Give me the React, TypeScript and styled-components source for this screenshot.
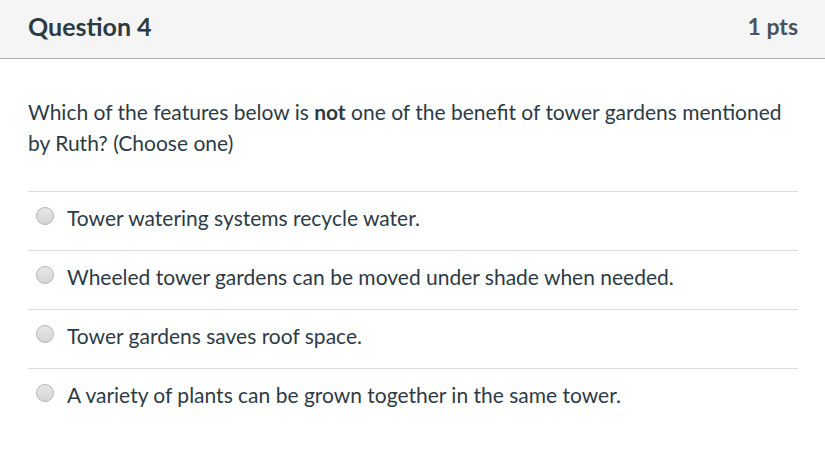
import * as React from "react"
import styled, { createGlobalStyle } from "styled-components"

const answers = [
  "Tower watering systems recycle water.",
  "Wheeled tower gardens can be moved under shade when needed.",
  "Tower gardens saves roof space.",
  "A variety of plants can be grown together in the same tower.",
]

const GlobalStyle = createGlobalStyle`
  body {
    margin: 0;
    background: #fff;
    font-family: Lato, "Open Sans", sans-serif;
    color: #2d3b45;
  }
`

export default function App() {
  return (
    <>
      <GlobalStyle />
      <QuestionCard>
        <Header>
          <Title>Question 4</Title>
          <Points>1 pts</Points>
        </Header>
        <Body>
          <Prompt>
            Which of the features below is <strong>not</strong> one of the benefit of tower
            gardens mentioned by Ruth? (Choose one)
          </Prompt>
          <AnswerList>
            {answers.map((text) => (
              <Answer key={text}>
                <Radio />
                <AnswerText>{text}</AnswerText>
              </Answer>
            ))}
          </AnswerList>
        </Body>
      </QuestionCard>
    </>
  )
}

const QuestionCard = styled.div`
  width: 825px;
  height: 452px;
  background: #fff;
`

const Header = styled.div`
  height: 59px;
  box-sizing: border-box;
  padding: 0 27px 6px 28px;
  background: #f5f5f5;
  border-bottom: 1px solid #a8adb0;
  display: flex;
  align-items: center;
  justify-content: space-between;
`

const Title = styled.h2`
  margin: 0;
  font-size: 25px;
  font-weight: 700;
  color: #2d3b45;
`

const Points = styled.span`
  font-size: 23px;
  font-weight: 700;
  color: #4a5359;
`

const Body = styled.div`
  padding: 37px 27px 0 28px;
`

const Prompt = styled.p`
  margin: 0;
  font-size: 21px;
  line-height: 31px;

  strong {
    font-weight: 700;
  }
`

const AnswerList = styled.div`
  margin-top: 33px;
`

const Answer = styled.div`
  height: 59px;
  border-top: 1px solid #dadcde;
  display: flex;
  align-items: center;
  gap: 13px;
  padding-left: 8px;
  padding-bottom: 8px;
  box-sizing: border-box;
`

const Radio = styled.span`
  width: 18px;
  height: 18px;
  margin-top: -2px;
  border-radius: 50%;
  box-sizing: border-box;
  border: 1px solid #b4b4b4;
  background: linear-gradient(#e6e6e6, #d6d6d6);
  flex: none;
`

const AnswerText = styled.span`
  font-size: 21px;
  color: #2d3b45;
`
